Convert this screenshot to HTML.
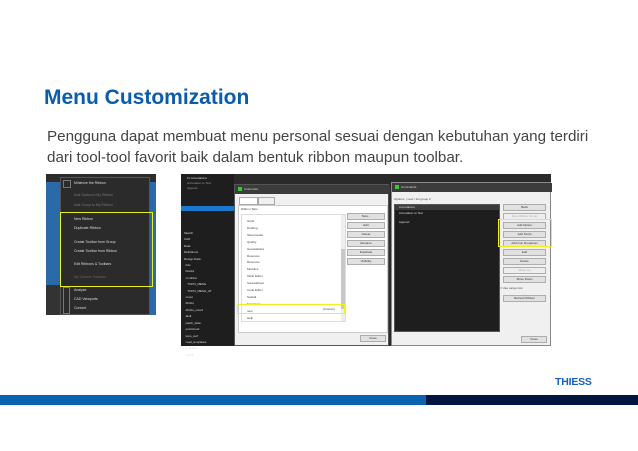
<!DOCTYPE html>
<html><head><meta charset="utf-8"><style>
*{margin:0;padding:0;box-sizing:border-box}
body{width:638px;height:451px;background:#fff;position:relative;overflow:hidden;font-family:"Liberation Sans",sans-serif}
.a{position:absolute}
.t{font-size:3.5px;color:#ddd;white-space:nowrap;line-height:1}
.btn{position:absolute;background:#e1e1e1;border:1px solid #adadad;font-size:3px;color:#333;text-align:center;line-height:5px;height:7px}
.li{position:absolute;left:5px;font-size:3px;color:#444}
</style></head><body>
<div class="a" style="left:44px;top:86px;font-size:21px;font-weight:bold;color:#0a5cad">Menu Customization</div>
<div class="a" style="left:47px;top:126px;font-size:15.2px;color:#444;line-height:21px;white-space:nowrap">Pengguna dapat membuat menu personal sesuai dengan kebutuhan yang terdiri<br>dari tool-tool favorit baik dalam bentuk ribbon maupun toolbar.</div>

<!-- left menu image -->
<div class="a" style="left:46px;top:174px;width:110px;height:141px;background:#2b6aa8">
 <div class="a" style="left:0;top:0;width:110px;height:8px;background:#2d2d2d"></div>
 <div class="a" style="left:14px;top:3px;width:90px;height:138px;background:#2b2b2b;border:1px solid #555"></div>
 <div class="a" style="left:0;top:111px;width:14px;height:30px;background:#333"></div>
 <div class="a t" style="left:28px;top:8px">Minimize the Ribbon</div>
 <div class="a" style="left:17px;top:6px;width:8px;height:8px;border:1px solid #777"></div>
 <div class="a t" style="left:28px;top:20px;color:#777">Add Option to My Ribbon</div>
 <div class="a t" style="left:28px;top:30px;color:#777">Add Group to My Ribbon</div>
 <div class="a t" style="left:28px;top:44px">New Ribbon</div>
 <div class="a t" style="left:28px;top:53px">Duplicate Ribbon</div>
 <div class="a t" style="left:28px;top:67px">Create Toolbar from Group</div>
 <div class="a t" style="left:28px;top:76px">Create Toolbar from Ribbon</div>
 <div class="a t" style="left:28px;top:89px">Edit Ribbons &amp; Toolbars</div>
 <div class="a t" style="left:28px;top:102px;color:#666">My Custom Toolbars</div>
 <div class="a" style="left:14px;top:38px;width:93px;height:75px;border:1.5px solid #e8f020"></div>
 <div class="a t" style="left:28px;top:115px">Analyse</div>
 <div class="a t" style="left:28px;top:124px">CAD Viewports</div>
 <div class="a t" style="left:28px;top:133px">Convert</div>
 <div class="a" style="left:17px;top:113px;width:7px;height:27px;border:1px solid #777"></div>
</div>

<!-- middle+right image -->
<div class="a" style="left:181px;top:174px;width:370px;height:172px;background:#2a2a2a">
 <div class="a" style="left:0;top:0;width:53px;height:172px;background:#1e1e1e"></div>
 <div class="a" style="left:0;top:32px;width:53px;height:5px;background:#1b78d0"></div>
 <div class="a t" style="left:6px;top:3px;font-size:3px">Fx Annotations</div>
 <div class="a t" style="left:6px;top:8px;font-size:3px;color:#999">Annotation to Text</div>
 <div class="a t" style="left:6px;top:13px;font-size:3px;color:#999">Append</div>
 <div class="a t" style="left:3px;top:56px;font-size:3px;line-height:6.4px">Sketch<br>CAD<br>Data<br>Definitions<br>Design Data<br>&nbsp;&nbsp;bds<br>&nbsp;&nbsp;blocks<br>&nbsp;&nbsp;combine<br>&nbsp;&nbsp;&nbsp;&nbsp;TOPO_MESH<br>&nbsp;&nbsp;&nbsp;&nbsp;TOPO_MESH_off<br>&nbsp;&nbsp;cover<br>&nbsp;&nbsp;dhobs<br>&nbsp;&nbsp;dhobs_coord<br>&nbsp;&nbsp;fault<br>&nbsp;&nbsp;patch_data<br>&nbsp;&nbsp;pointcloud<br>&nbsp;&nbsp;topo_surf<br>&nbsp;&nbsp;road_templates<br>&nbsp;&nbsp;s_shape<br>&nbsp;&nbsp;srcDF</div>
 <!-- Customize dialog -->
 <div class="a" style="left:53px;top:10px;width:155px;height:162px;background:#f0f0f0;border:1px solid #555">
  <div class="a" style="left:0;top:0;width:155px;height:9px;background:#3c3c3c"></div>
  <div class="a" style="left:3px;top:2px;width:4px;height:4px;background:#3c3"></div>
  <div class="a t" style="left:9px;top:3px;font-size:3px">Customize</div>
  <div class="a" style="left:4px;top:12px;width:19px;height:8px;background:#fff;border:1px solid #aaa"></div>
  <div class="a" style="left:23px;top:12px;width:17px;height:8px;border:1px solid #aaa"></div>
  <div class="a" style="left:3px;top:20px;width:150px;height:128px;background:#fff;border:1px solid #ccc"></div>
  <div class="a t" style="left:6px;top:23px;font-size:3px;color:#444">Ribbon Tabs</div>
  <div class="a" style="left:6px;top:29px;width:105px;height:108px;background:#fff;border:1px solid #ddd">
   <div class="li" style="top:3px;line-height:6.9px">Grids<br>Drafting<br>Sheetmodel<br>Quality<br>Geostatistics<br>Reserves<br>Reserves<br>Modules<br>Table Editor<br>Spreadsheet<br>Code Editor<br>Spatial<br>Transform<br>new<br>Help</div>
   <div class="a" style="right:0;top:0;width:4px;height:106px;background:#eee"></div>
   <div class="a" style="right:0;top:34px;width:4px;height:60px;background:#c8c8c8"></div>
  </div>
  <div class="a" style="left:2px;top:119px;width:108px;height:10px;border:1.5px solid #eef020"></div>
  <div class="a li" style="left:88px;top:122px">[Custom]</div>
  <div class="btn" style="left:112px;top:28px;width:38px">New...</div>
  <div class="btn" style="left:112px;top:37px;width:38px">Edit</div>
  <div class="btn" style="left:112px;top:46px;width:38px">Delete</div>
  <div class="btn" style="left:112px;top:55px;width:38px">Rename</div>
  <div class="btn" style="left:112px;top:64px;width:38px">Duplicate</div>
  <div class="btn" style="left:112px;top:73px;width:38px">Visibility</div>
  <div class="btn" style="left:125px;top:150px;width:26px">Close</div>
 </div>
 <!-- Commands dialog -->
 <div class="a" style="left:210px;top:8px;width:160px;height:164px;background:#f0f0f0;border:1px solid #888">
  <div class="a" style="left:0;top:0;width:160px;height:9px;background:#3c3c3c"></div>
  <div class="a" style="left:3px;top:2px;width:4px;height:4px;background:#3c3"></div>
  <div class="a t" style="left:9px;top:3px;font-size:3px">Commands</div>
  <div class="a li" style="left:2px;top:14px">Options &nbsp;| new / 1st group 2</div>
  <div class="a" style="left:2px;top:21px;width:106px;height:128px;background:#1e1e1e;border:1px solid #555">
   <div class="a" style="left:0;top:0;width:104px;height:5px;background:#3a3a3a"></div>
   <div class="a t" style="left:4px;top:1px;font-size:3px">Annotations</div>
   <div class="a t" style="left:4px;top:7px;font-size:3px">Annotation to Text</div>
   <div class="a t" style="left:4px;top:16px;font-size:3px">Append</div>
  </div>
  <div class="btn" style="left:111px;top:21px;width:43px">Back</div>
  <div class="btn" style="left:111px;top:30px;width:43px;color:#aaa;background:#eee">New Ribbon Group</div>
  <div class="btn" style="left:111px;top:39px;width:43px">Add Option</div>
  <div class="btn" style="left:111px;top:48px;width:43px">Add Script</div>
  <div class="btn" style="left:111px;top:57px;width:43px">Add Icon Dropdown</div>
  <div class="a" style="left:106px;top:36px;width:54px;height:28px;border:1.5px solid #eef020"></div>
  <div class="btn" style="left:111px;top:66px;width:43px">Edit</div>
  <div class="btn" style="left:111px;top:75px;width:43px">Delete</div>
  <div class="btn" style="left:111px;top:84px;width:43px;color:#aaa;background:#eee">Move Up</div>
  <div class="btn" style="left:111px;top:93px;width:43px">Move Down</div>
  <div class="a li" style="left:108px;top:103px">&#9633; Use Large Icon</div>
  <div class="btn" style="left:111px;top:112px;width:43px">Refresh Ribbon</div>
  <div class="btn" style="left:129px;top:153px;width:26px">Close</div>
 </div>
</div>

<div class="a" style="left:555px;top:376px;font-size:10.5px;font-weight:bold;color:#1560b8;letter-spacing:-0.2px">THIESS</div>
<div class="a" style="left:0;top:395px;width:426px;height:10px;background:#0a63b0"></div>
<div class="a" style="left:426px;top:395px;width:212px;height:10px;background:#041640"></div>
</body></html>
